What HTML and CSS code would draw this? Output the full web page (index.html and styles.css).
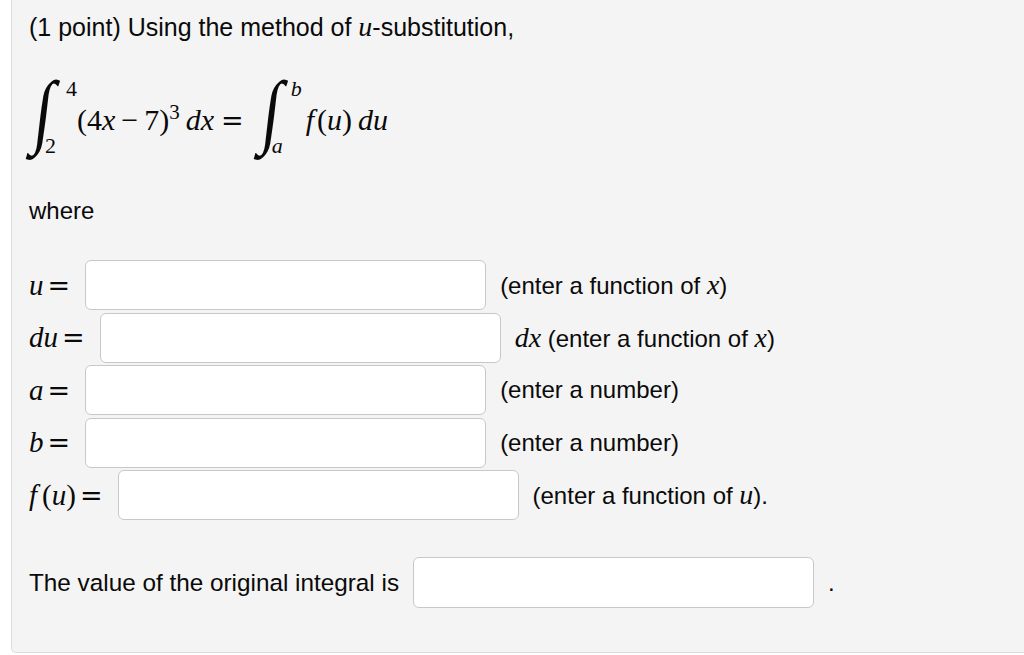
FILE: index.html
```html
<!DOCTYPE html>
<html>
<head>
<meta charset="utf-8">
<link rel="stylesheet" href="styles.css">
</head>
<body>
<div class="panel">
  <p class="intro">(1 point) Using the method of <i class="mv">u</i>-substitution,</p>
  <div class="eq">
    <span class="intg"><span class="sign">∫</span><span class="up">4</span><span class="lo">2</span></span>
    <span class="expr">(4<i>x</i><span class="bin">−</span>7)<sup>3</sup><i class="dx">dx</i><span class="rel">=</span></span>
    <span class="intg intg2"><span class="sign">∫</span><span class="up"><i>b</i></span><span class="lo"><i>a</i></span></span>
    <span class="expr"><i class="f">f</i>(<i>u</i>)<i class="dx">du</i></span>
  </div>
  <p class="where">where</p>
  <div class="rows">
    <div class="row"><span class="lab"><i>u</i><span class="rel">=</span></span><input class="box" type="text"><span class="note">(enter a function of <i class="mv">x</i>)</span></div>
    <div class="row"><span class="lab"><i>du</i><span class="rel">=</span></span><input class="box" type="text"><span class="note note2"><i class="mv">dx</i> (enter a function of <i class="mv">x</i>)</span></div>
    <div class="row"><span class="lab"><i>a</i><span class="rel">=</span></span><input class="box" type="text"><span class="note">(enter a number)</span></div>
    <div class="row"><span class="lab"><i>b</i><span class="rel">=</span></span><input class="box" type="text"><span class="note">(enter a number)</span></div>
    <div class="row"><span class="lab"><i class="f">f</i>(<i>u</i>)<span class="rel">=</span></span><input class="box" type="text"><span class="note">(enter a function of <i class="mv">u</i>).</span></div>
  </div>
  <div class="final"><span class="ftext">The value of the original integral is</span><input class="box" type="text"><span class="dot">.</span></div>
</div>
</body>
</html>
```

FILE: styles.css
```css
html, body {
  margin: 0;
  padding: 0;
  background: #ffffff;
  overflow: hidden;
}
body {
  font-family: "Liberation Sans", Arial, sans-serif;
  color: #0a0a0a;
}
.panel {
  margin-left: 11px;
  height: 653px;
  box-sizing: border-box;
  background: #f4f4f4;
  border-left: 1px solid #dcdcdc;
  border-bottom: 1px solid #dcdcdc;
  border-bottom-left-radius: 5px;
  padding: 0 0 0 17px;
}
.intro {
  margin: 0;
  padding-top: 12px;
  font-size: 25px;
  line-height: 30px;
}
.mv {
  font-family: "Liberation Serif", "Times New Roman", serif;
  font-style: italic;
  font-size: 28px;
}
.eq {
  margin-top: 38px;
  height: 80px;
  display: flex;
  align-items: center;
  font-family: "Liberation Serif", "Times New Roman", serif;
  font-size: 30px;
}
.intg {
  position: relative;
  display: inline-block;
  width: 48px;
  height: 80px;
}
.intg .sign {
  display: block;
  width: 30px;
  font-size: 82px;
  line-height: 80px;
  font-style: normal;
  margin-top: -9px;
  margin-left: 4px;
  transform: skewX(-7deg) scaleX(0.8);
  transform-origin: 0 70%;
}
.intg .up, .intg .lo {
  position: absolute;
  font-size: 22px;
  line-height: 22px;
}
.intg .up { left: 37px; top: -2px; }
.intg .lo { left: 16px; top: 55px; }
.intg2 { margin-left: 8px; width: 49px; }
.intg2 .up { left: 34px; }
.intg2 .lo { left: 15px; }
.expr { white-space: nowrap; }
.expr sup {
  font-size: 21px;
  vertical-align: 0;
  position: relative;
  top: -11px;
}
.bin { margin: 0 6px; }
.dx { margin-left: 6px; }
.rel {
  font-family: "DejaVu Serif", "Liberation Serif", serif;
  font-size: 27px;
  margin: 0 4px;
}
.eq .rel { margin: 0 5px 0 7px; }
.f { margin-right: 3px; }
.lab .f { margin-right: 5px; }
.where {
  margin: 36px 0 0 0;
  font-size: 24px;
  line-height: 30px;
}
.rows {
  margin-top: 34px;
  display: flex;
  flex-direction: column;
  gap: 2.5px;
}
.row {
  display: flex;
  align-items: center;
  height: 50px;
}
.lab {
  font-family: "Liberation Serif", "Times New Roman", serif;
  font-size: 29px;
  margin-right: 11px;
  white-space: nowrap;
}
.box {
  width: 401px;
  height: 50px;
  box-sizing: border-box;
  border: 1px solid #c8c8c8;
  border-radius: 6px;
  background: #fff;
  margin: 0;
  padding: 0;
}
.note {
  margin-left: 14px;
  font-size: 24px;
}
.final {
  margin-top: 37px;
  display: flex;
  align-items: center;
  height: 51px;
}
.ftext {
  font-size: 24.3px;
  margin-right: 14px;
}
.final .box { height: 51px; }
.dot {
  margin-left: 14px;
  font-size: 24px;
}
```
